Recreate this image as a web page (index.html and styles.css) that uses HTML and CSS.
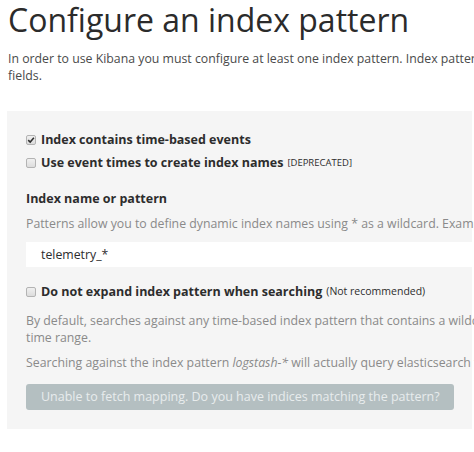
FILE: index.html
```html
<!DOCTYPE html>
<html>
<head>
<meta charset="utf-8">
<link rel="stylesheet" href="styles.css">
</head>
<body>
<div class="page">
  <h1 class="title">Configure an index pattern</h1>
  <p class="intro"><span class="nobreak">In order to use Kibana you must configure at least one index pattern. Index patterns are used to identify the Elasticsearch index to run search and analytics against. They are also used to configure</span> fields.</p>
  <div class="panel">
    <label class="check-row"><span class="box checked"><svg viewBox="0 0 10 10" width="8" height="8"><path d="M1.5 5.2 L4 7.6 L8.6 2.2" fill="none" stroke="#2e2e2e" stroke-width="1.9"/></svg></span><span class="label-text">Index contains time-based events</span></label>
    <label class="check-row second"><span class="box"></span><span class="label-text">Use event times to create index names</span> <span class="note-upper">[DEPRECATED]</span></label>
    <div class="field-label">Index name or pattern</div>
    <div class="help">Patterns allow you to define dynamic index names using * as a wildcard. Example: logstash-*</div>
    <div class="input">telemetry_*</div>
    <label class="check-row third"><span class="box"></span><span class="label-text">Do not expand index pattern when searching</span> <span class="note">(Not recommended)</span></label>
    <div class="help desc"><span class="nobreak">By default, searches against any time-based index pattern that contains a wildcard will automatically be expanded to query only the indices that contain data within the currently selected</span> time range.</div>
    <div class="help desc2">Searching against the index pattern <em>logstash-*</em> will actually query elasticsearch for the specific matching indices.</div>
    <div class="btn">Unable to fetch mapping. Do you have indices matching the pattern?</div>
  </div>
</div>
</body>
</html>
```

FILE: styles.css
```css
html, body {
  margin: 0;
  padding: 0;
  background: #ffffff;
}
body {
  font-family: "Open Sans", "Liberation Sans", sans-serif;
  color: #444444;
  width: 474px;
  height: 452px;
  overflow: hidden;
}
.page {
  padding: 0 2px 0 7px;
  overflow: hidden;
}
.nobreak {
  white-space: nowrap;
}
.title {
  margin: 0 0 0 1px;
  font-size: 32px;
  font-weight: 400;
  line-height: 39px;
  color: #2b2b2b;
  white-space: nowrap;
}
.intro {
  margin: 11px 0 0 1px;
  font-size: 12.3px;
  line-height: 17px;
  color: #4a4a4a;
}
.panel {
  margin-top: 27px;
  background: #f5f5f5;
  width: 465px;
  box-sizing: border-box;
  padding: 17px 0 19px 19px;
}
.check-row {
  display: flex;
  align-items: center;
  white-space: nowrap;
  font-size: 12.5px;
  line-height: 23px;
  color: #2d2d2d;
}
.box {
  flex: none;
  box-sizing: border-box;
  width: 10px;
  height: 10px;
  margin: 0 5px 0 0;
  border: 1px solid #b3b3b3;
  border-radius: 2px;
  background: linear-gradient(#f0f0f0, #dcdcdc);
  display: flex;
  align-items: center;
  justify-content: center;
}
.label-text {
  font-weight: 700;
}
.note-upper {
  font-size: 9.5px;
  margin-left: 4px;
  color: #2d2d2d;
}
.note {
  font-size: 10.5px;
  margin-left: 4px;
  color: #2d2d2d;
}
.field-label {
  margin-top: 13px;
  font-weight: 700;
  font-size: 12.5px;
  line-height: 23px;
  color: #2d2d2d;
}
.help {
  margin-top: 5px;
  font-size: 12.3px;
  line-height: 17px;
  color: #8a8a8a;
  white-space: nowrap;
}
.input {
  margin-top: 10px;
  width: 460px;
  height: 25px;
  background: #ffffff;
  box-sizing: border-box;
  padding-left: 15px;
  font-size: 12.3px;
  line-height: 25px;
  color: #2d2d2d;
}
.check-row.third {
  margin-top: 13px;
}
.desc {
  margin-top: 9px;
  white-space: normal;
}
.desc2 {
  margin-top: 8px;
}
.btn {
  display: inline-block;
  margin-top: 13px;
  background: #b4bfc1;
  color: #e8eced;
  font-size: 12.5px;
  line-height: 26px;
  padding: 0 14px 0 15px;
  border-radius: 3px;
  white-space: nowrap;
}
```
